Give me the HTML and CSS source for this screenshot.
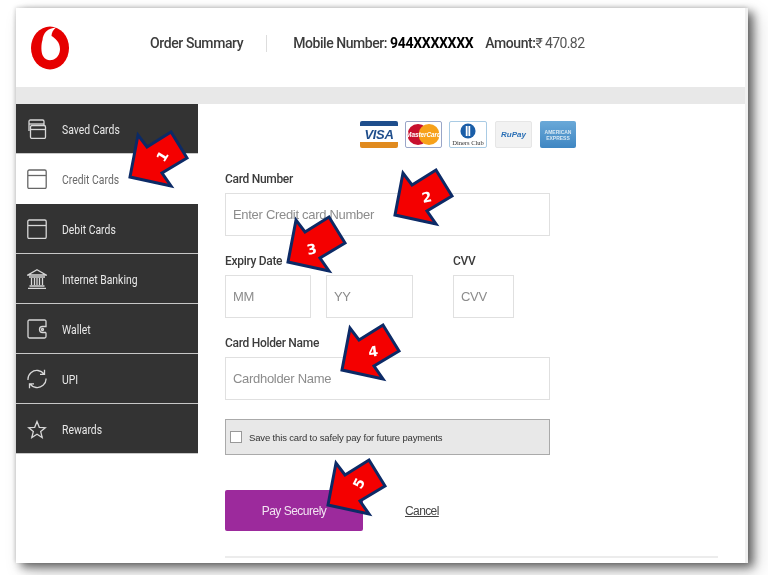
FILE: index.html
```html
<!DOCTYPE html>
<html lang="en">
<head>
<meta charset="utf-8">
<title>Order Summary</title>
<link rel="stylesheet" href="styles.css">
</head>
<body>
<div class="page">
  <header class="header">
    <svg class="logo" viewBox="0 0 40 44" width="40" height="44">
      <ellipse cx="19" cy="22" rx="19" ry="21.500" fill="#e60000"/>
      <path d="M25 1.500C17 2 12 7 11.500 14C10 18 10 27 12 30C14 34 18 34.500 21 34C26 33 29 28 29 23C29 16 24 12 20.500 10C20.500 7 22 4 25 1.500Z" fill="#fff"/>
    </svg>
    <div class="summary">
      <div class="summary-title">Order Summary</div>
      <div class="summary-sep"></div>
      <div class="summary-item">Mobile Number: <b class="mobile">944XXXXXXX</b></div>
      <div class="summary-item amount">Amount:<span class="price">₹ 470.82</span></div>
    </div>
  </header>
  <div class="band"></div>
  <div class="content">
    <nav class="sidebar">
      <a class="nav-item">
        <svg class="nav-icon" viewBox="0 0 20 20"><path d="M2 12V2.500Q2 1 3.500 1H15.500Q17 1 17 2.500V6"/><path d="M2 5H17"/><rect x="3.500" y="6.500" width="15" height="13" rx="1.500"/><path d="M3.500 10.500H18.500"/></svg>
        <span class="nav-label">Saved Cards</span>
      </a>
      <a class="nav-item active">
        <svg class="nav-icon" viewBox="0 0 20 20"><rect x=".8" y="1" width="18.400" height="18.500" rx="1.500"/><path d="M1 6.500H19"/></svg>
        <span class="nav-label">Credit Cards</span>
      </a>
      <a class="nav-item">
        <svg class="nav-icon" viewBox="0 0 20 20"><rect x=".8" y="1" width="18.400" height="18.500" rx="1.500"/><path d="M1 6.500H19"/></svg>
        <span class="nav-label">Debit Cards</span>
      </a>
      <a class="nav-item">
        <svg class="nav-icon" viewBox="0 0 20 20"><path d="M10 .8L19 6H1Z"/><path d="M2 8H18M2.500 17H17.500M1 19.300H19M4.500 9V16M7.500 9V16M10 9V16M12.500 9V16M15.500 9V16"/></svg>
        <span class="nav-label">Internet Banking</span>
      </a>
      <a class="nav-item">
        <svg class="nav-icon" viewBox="0 0 20 20"><path d="M19 5V2.500Q19 1 17.500 1H2.500Q1 1 1 2.500V17.500Q1 19 2.500 19H17.500Q19 19 19 17.500V13.500"/><path d="M19 13.500H15.500Q12.500 13.500 12.500 10.500T15.500 7.500H19V5"/><circle cx="15.500" cy="10.500" r="1"/></svg>
        <span class="nav-label">Wallet</span>
      </a>
      <a class="nav-item">
        <svg class="nav-icon" viewBox="0 0 20 20"><path d="M1 11C.5 5 6 .8 11 1.500C13.500 1.800 15.500 3 17 5M17.500 .8V5.300H13"/><path d="M19 9.500C19.500 15 14 19.300 9 18.500C6.500 18.200 4.500 17 3 15M2.500 19.300V14.800H7"/></svg>
        <span class="nav-label">UPI</span>
      </a>
      <a class="nav-item">
        <svg class="nav-icon" viewBox="0 0 20 20"><path d="M10 2.500L12.300 8.300L18.300 8.700L13.700 12.600L15.200 18.500L10 15.300L4.800 18.500L6.300 12.600L1.700 8.700L7.700 8.300Z"/></svg>
        <span class="nav-label">Rewards</span>
      </a>
    </nav>
    <main class="main">
      <div class="card-logos">
        <div class="brand visa"><span class="visa-text">VISA</span></div>
        <div class="brand master">
          <svg viewBox="0 0 37 27" width="37" height="27"><circle cx="13" cy="13.500" r="10.500" fill="#c8102e"/><circle cx="24" cy="13.500" r="10.500" fill="#f7a11a"/></svg>
          <span class="master-text">MasterCard</span>
        </div>
        <div class="brand diners">
          <svg viewBox="0 0 18 18" width="16" height="16"><circle cx="9" cy="9" r="8.500" fill="#1a5ea8"/><path d="M7.500 3.500V14.500M10.500 3.500V14.500" stroke="#fff" stroke-width="2"/></svg>
          <span class="diners-text">Diners Club</span>
        </div>
        <div class="brand rupay"><span class="rupay-text">RuPay</span></div>
        <div class="brand amex"><span class="amex-text">AMERICAN<br>EXPRESS</span></div>
      </div>
      <form class="form">
        <label class="label first">Card Number</label>
        <input class="field wide" placeholder="Enter Credit card Number">
        <div class="expiry-row">
          <div class="col">
            <label class="label">Expiry Date</label>
            <div class="pair">
              <input class="field month" placeholder="MM">
              <input class="field year" placeholder="YY">
            </div>
          </div>
          <div class="col">
            <label class="label">CVV</label>
            <input class="field cvv" placeholder="CVV">
          </div>
        </div>
        <label class="label">Card Holder Name</label>
        <input class="field wide" placeholder="Cardholder Name">
        <div class="save-row">
          <span class="checkbox"></span>
          <span>Save this card to safely pay for future payments</span>
        </div>
        <div class="actions">
          <button class="pay" type="button">Pay Securely</button>
          <a class="cancel">Cancel</a>
        </div>
      </form>
      <div class="rule"></div>
    </main>
  </div>
</div>
<svg class="arrows" viewBox="0 0 768 575" width="768" height="575">
  <defs>
    <polygon id="arrow" points="0,0 8,-42 17,-30 41,-45 57,-19 32,-4 41,9"/>
  </defs>
  <g transform="translate(130 177)"><use href="#arrow" class="arrow"/><text class="num" transform="translate(34 -14) rotate(-58)">1</text></g>
  <g transform="translate(395 215)"><use href="#arrow" class="arrow"/><text class="num" transform="translate(28 -12) rotate(-12)">2</text></g>
  <g transform="translate(288 262)"><use href="#arrow" class="arrow"/><text class="num" transform="translate(20 -7) rotate(-12)">3</text></g>
  <g transform="translate(342 370)"><use href="#arrow" class="arrow"/><text class="num" transform="translate(27 -13) rotate(-8)">4</text></g>
  <g transform="translate(328 505)"><use href="#arrow" class="arrow"/><text class="num" transform="translate(33 -15) rotate(-62)">5</text></g>
</svg>
</body>
</html>
```
FILE: styles.css
```css
html, body {
  margin: 0;
  padding: 0;
  background: #fff;
  width: 768px;
  height: 575px;
  overflow: hidden;
}
body {
  position: relative;
  font-family: "Roboto", "Liberation Sans", sans-serif;
  color: #333;
}
.page {
  margin: 8px 0 0 16px;
  width: 729px;
  height: 555px;
  background: #fff;
  border-right: 3px solid #f0f0f0;
  box-shadow: 5px 4px 9px rgba(0, 0, 0, .55), 8px 8px 18px rgba(0, 0, 0, .2), -1px -1px 4px rgba(0, 0, 0, .12);
  display: flex;
  flex-direction: column;
  filter: blur(.35px);
}
.header {
  height: 79px;
  display: flex;
  align-items: center;
  font-size: 14px;
  font-weight: 500;
  color: #3c3c3c;
}
.logo {
  margin: 0 0 0 15px;
  flex: none;
}
.summary {
  display: flex;
  align-items: center;
  margin-bottom: 9px;
}
.summary-title {
  margin-left: 79px;
  letter-spacing: -.4px;
  white-space: nowrap;
}
.summary-sep {
  width: 1px;
  height: 17px;
  background: #ddd;
  margin-left: 23px;
}
.summary-item {
  margin-left: 26px;
  letter-spacing: -.45px;
  white-space: nowrap;
}
.amount {
  margin-left: 12px;
}
.mobile {
  color: #000;
  font-weight: 700;
  letter-spacing: -.3px;
}
.price {
  font-weight: 400;
  color: #555;
  letter-spacing: -.6px;
}
.band {
  height: 17px;
  background: #e8e8e8;
}
.content {
  display: flex;
  flex: 1;
}
.sidebar {
  width: 182px;
  flex: none;
  align-self: flex-start;
}
.nav-item {
  display: flex;
  align-items: center;
  gap: 15px;
  height: 49px;
  padding-left: 11px;
  background: #333;
  color: #e8e8e8;
  font-size: 13.500px;
  border-bottom: 1px solid #c8c8c8;
}
.nav-label {
  transform: scaleX(.77);
  transform-origin: left center;
  white-space: nowrap;
}
.nav-item.active {
  background: #fff;
  color: #6a6a6a;
  border-bottom-color: #fff;
}
.nav-icon {
  width: 20px;
  height: 20px;
  flex: none;
  fill: none;
  stroke: #d8d8d8;
  stroke-width: 1.300;
}
.active .nav-icon {
  stroke: #666;
}
.main {
  flex: 1;
  padding: 17px 27px 0 27px;
  min-width: 0;
}
.card-logos {
  display: flex;
  gap: 7px;
  padding-left: 135px;
  height: 27px;
}
.brand {
  width: 37px;
  height: 27px;
  box-sizing: border-box;
  border-radius: 2px;
  position: relative;
  display: flex;
  align-items: center;
  justify-content: center;
  overflow: hidden;
  flex: none;
}
.visa {
  width: 38px;
  background: linear-gradient(#1f4e8c 0 5px, #fff 5px 21px, #e08a1e 21px);
}
.visa-text {
  font: italic 700 13px "Liberation Sans", sans-serif;
  color: #1f4e8c;
  letter-spacing: -.3px;
}
.master {
  border: 1px solid #9aa6c8;
  background: #fff;
}
.master svg {
  position: absolute;
  left: -1px;
  top: -1px;
}
.master-text {
  position: relative;
  font: italic 700 6.500px "Liberation Sans", sans-serif;
  color: #fff;
  letter-spacing: -.1px;
  white-space: nowrap;
}
.diners {
  width: 38px;
  border: 1px solid #a9cbe4;
  background: #fff;
  flex-direction: column;
}
.diners-text {
  font: 6.500px/7px "Liberation Serif", serif;
  color: #333;
  white-space: nowrap;
}
.rupay {
  margin-left: 1px;
  background: #f2f2f2;
  border: 1px solid #e6e6e6;
}
.rupay-text {
  font: italic 700 8px "Liberation Sans", sans-serif;
  color: #2a6fb5;
}
.amex {
  margin-left: 1px;
  width: 36px;
  background: linear-gradient(#6aa9d8, #3f86c2);
}
.amex-text {
  font: 700 5px/6px "Liberation Sans", sans-serif;
  color: #d8e8f4;
  text-align: center;
}
.form {
  display: flex;
  flex-direction: column;
  align-items: flex-start;
}
.label {
  display: block;
  font-size: 12px;
  line-height: 16px;
  font-weight: 500;
  color: #3c3c3c;
  margin: 17px 0 6px;
  letter-spacing: -.3px;
  white-space: nowrap;
}
.label.first {
  margin: 23px 0 6px;
}
.field {
  box-sizing: border-box;
  height: 43px;
  border: 1px solid #e0e0e0;
  background: #fff;
  padding: 0 7px;
  margin: 0;
  font: 13px "Liberation Sans", sans-serif;
  letter-spacing: -.3px;
  outline: none;
  border-radius: 0;
}
.field::placeholder {
  color: #8c8c8c;
  opacity: 1;
}
.wide {
  width: 325px;
}
.month {
  width: 86px;
}
.year {
  width: 87px;
}
.cvv {
  width: 61px;
}
.expiry-row {
  display: flex;
  gap: 40px;
}
.pair {
  display: flex;
  gap: 15px;
}
.save-row {
  box-sizing: border-box;
  width: 325px;
  height: 36px;
  margin-top: 19px;
  background: #e8e8e8;
  border: 1px solid #aaa;
  display: flex;
  align-items: center;
  gap: 7px;
  padding-left: 4px;
  font: 9.500px "Liberation Sans", sans-serif;
  letter-spacing: -.15px;
  color: #333;
}
.checkbox {
  box-sizing: border-box;
  width: 12px;
  height: 12px;
  background: #fff;
  border: 1px solid #999;
  flex: none;
}
.actions {
  display: flex;
  align-items: center;
  margin-top: 35px;
}
.pay {
  width: 138px;
  height: 41px;
  background: #9c2a9c;
  border: 0;
  border-radius: 2px;
  color: #f2e4f2;
  font: 12px "Liberation Sans", sans-serif;
  letter-spacing: -.5px;
  padding: 0;
}
.cancel {
  margin-left: 42px;
  font: 12px "Liberation Sans", sans-serif;
  letter-spacing: -.6px;
  color: #444;
  text-decoration: underline;
}
.rule {
  height: 2px;
  background: #ececec;
  margin-top: 25px;
}
.arrows {
  position: absolute;
  left: 0;
  top: 0;
  pointer-events: none;
  filter: blur(.3px);
}
.arrow {
  fill: #f40000;
  stroke: #0c2a66;
  stroke-width: 3;
  stroke-linejoin: miter;
}
.num {
  font: 700 14px "DejaVu Sans", sans-serif;
  fill: #fff;
}
```
